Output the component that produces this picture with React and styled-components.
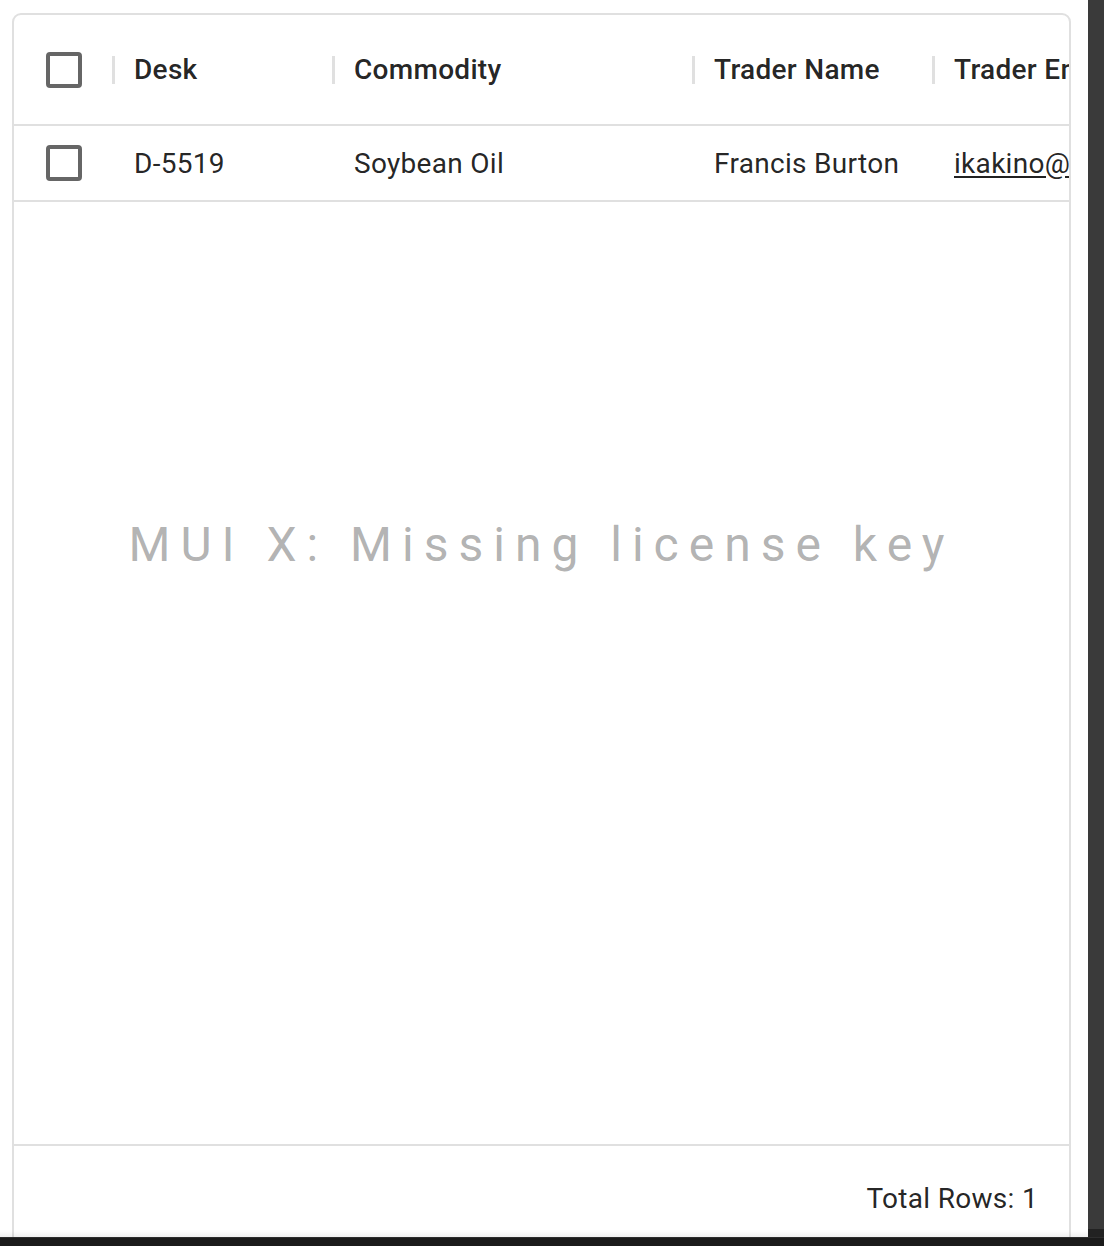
import React from 'react';
import styled, { createGlobalStyle } from 'styled-components';

const GlobalStyle = createGlobalStyle`
  html, body {
    margin: 0;
    padding: 0;
    background: #ffffff;
  }
  body {
    font-family: Roboto, "Liberation Sans", Arial, sans-serif;
    color: rgba(0, 0, 0, 0.87);
    -webkit-font-smoothing: antialiased;
  }
`;

const Page = styled.div`
  display: grid;
  grid-template-columns: 1088px 16px;
  grid-template-rows: 1237px 9px;
  width: 1104px;
  height: 1246px;
  overflow: hidden;
`;

const Main = styled.main`
  position: relative;
  padding: 13px 17px 0 12px;
  overflow: hidden;
  background: #ffffff;

  &::after {
    content: '';
    position: absolute;
    left: 0;
    right: 0;
    bottom: 0;
    height: 6px;
    background: linear-gradient(to bottom, rgba(0, 0, 0, 0), rgba(0, 0, 0, 0.06));
    pointer-events: none;
  }
`;

const SideStrip = styled.div`
  background: linear-gradient(to bottom, #3a3a3a 0, #3a3a3a 1229px, #222222 1229px);
`;

const BottomBar = styled.div`
  grid-column: 1 / span 2;
  background: #1b1b1b;
  border-top: 1px solid #2e2e2e;
`;

const DataGrid = styled.div`
  display: flex;
  flex-direction: column;
  height: 1241px;
  box-sizing: border-box;
  border: 2px solid #e0e0e0;
  border-radius: 9px;
  overflow: hidden;
  font-size: 28px;
  letter-spacing: 0.3px;
`;

const HeaderRow = styled.div`
  display: flex;
  align-items: center;
  flex: none;
  height: 109px;
  border-bottom: 2px solid #e0e0e0;
`;

const DataRow = styled.div`
  display: flex;
  align-items: center;
  flex: none;
  height: 74px;
  border-bottom: 2px solid #e0e0e0;
`;

const separatorRule = `
  &::after {
    content: '';
    position: absolute;
    right: -1px;
    top: 50%;
    width: 3px;
    height: 28px;
    margin-top: -14px;
    background: #e0e0e0;
  }
`;

const CheckCell = styled.div`
  flex: none;
  width: 100px;
  height: 100%;
  display: flex;
  align-items: center;
  justify-content: center;
  position: relative;

  ${props => props.$separator && separatorRule}
`;

const Cell = styled.div`
  flex: none;
  box-sizing: border-box;
  width: ${props => props.$width}px;
  height: 100%;
  display: flex;
  align-items: center;
  padding: 0 20px;
  white-space: nowrap;
  overflow: hidden;
  position: relative;
`;

const HeaderCell = styled(Cell)`
  font-weight: 500;
  overflow: visible;

  ${props => props.$separator && separatorRule}
`;

const Checkbox = styled.span`
  display: block;
  box-sizing: border-box;
  width: 36px;
  height: 36px;
  border: 4px solid rgba(0, 0, 0, 0.6);
  border-radius: 4px;
`;

const EmailLink = styled.a`
  color: inherit;
  text-decoration: underline;
  text-underline-offset: 3px;
`;

const Body = styled.div`
  flex: none;
  height: 944px;
  box-sizing: border-box;
  border-bottom: 2px solid #e0e0e0;
  display: flex;
  justify-content: center;
  padding-top: 315px;
`;

const Watermark = styled.div`
  font-size: 48px;
  line-height: 56px;
  height: 56px;
  letter-spacing: 10px;
  color: rgba(130, 130, 130, 0.62);
  white-space: nowrap;
`;

const Footer = styled.div`
  flex: none;
  height: 104px;
  display: flex;
  align-items: center;
  justify-content: flex-end;
  padding-right: 31px;
`;

const columns = [
  { key: 'desk', label: 'Desk', width: 220 },
  { key: 'commodity', label: 'Commodity', width: 360 },
  { key: 'traderName', label: 'Trader Name', width: 240 },
  { key: 'traderEmail', label: 'Trader Email', width: 320 },
];

const rows = [
  {
    id: 1,
    desk: 'D-5519',
    commodity: 'Soybean Oil',
    traderName: 'Francis Burton',
    traderEmail: 'ikakino@gmail.com',
  },
];

const App = () => (
  <>
    <GlobalStyle />
    <Page>
      <Main>
        <DataGrid>
          <HeaderRow>
            <CheckCell $separator>
              <Checkbox />
            </CheckCell>
            {columns.map(col => (
              <HeaderCell key={col.key} $width={col.width} $separator={col.key !== 'traderEmail'}>
                {col.label}
              </HeaderCell>
            ))}
          </HeaderRow>
          {rows.map(row => (
            <DataRow key={row.id}>
              <CheckCell>
                <Checkbox />
              </CheckCell>
              {columns.map(col => (
                <Cell key={col.key} $width={col.width}>
                  {col.key === 'traderEmail'
                    ? <EmailLink href={`mailto:${row.traderEmail}`}>{row.traderEmail}</EmailLink>
                    : row[col.key]}
                </Cell>
              ))}
            </DataRow>
          ))}
          <Body>
            <Watermark>MUI X: Missing license key</Watermark>
          </Body>
          <Footer>Total Rows: {rows.length}</Footer>
        </DataGrid>
      </Main>
      <SideStrip />
      <BottomBar />
    </Page>
  </>
);

export default App;
